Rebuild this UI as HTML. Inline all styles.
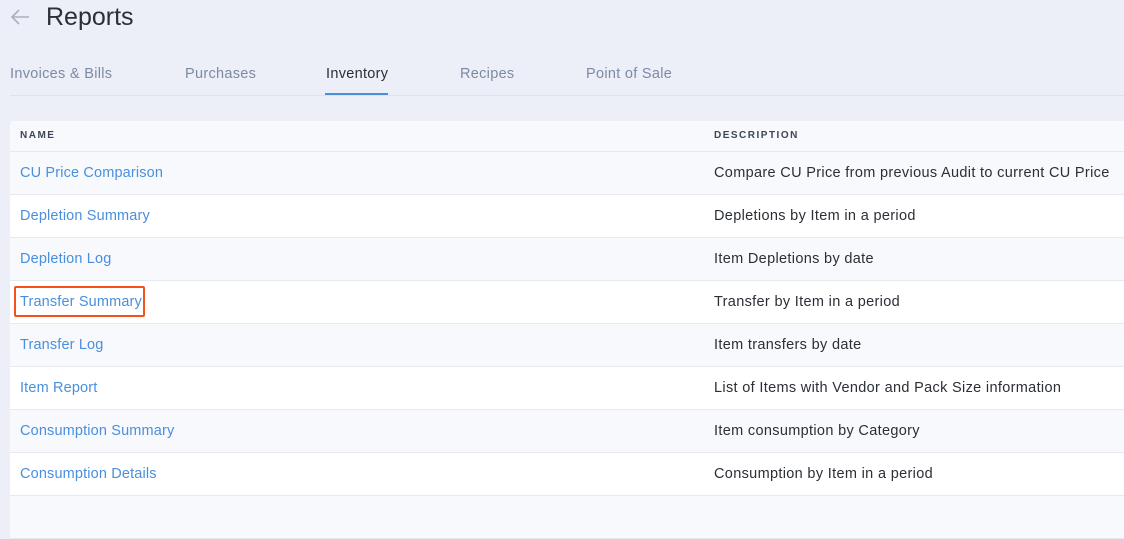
<!DOCTYPE html>
<html><head><style>
body{margin:0;width:1124px;height:506px;background:#eceff8;font-family:"Liberation Sans",sans-serif;overflow:hidden;position:relative}
.back{position:absolute;left:10px;top:8px}
h1{position:absolute;left:46px;top:3px;margin:0;font-weight:normal;font-size:25px;color:#2b2f36}
.tab{position:absolute;top:66px;font-size:14.5px;color:#7d8aa3;letter-spacing:0.3px}
.tabline{position:absolute;left:10px;right:0;top:95px;height:1px;background:#dde2ec}
.card{position:absolute;left:10px;top:121px;width:1114px;height:400px;background:#fff;border-radius:4px 0 0 0}
.hdr{height:30px;position:relative;background:#f8f9fc;border-bottom:1px solid #e6e9f0;border-radius:4px 0 0 0}
.hdr span{position:absolute;top:9px;font-size:10px;letter-spacing:1.5px;font-weight:bold;color:#3c4657}
.row{height:42px;border-bottom:1px solid #e6e9f0;position:relative;font-size:14.5px;letter-spacing:0.33px}
.row.a{background:#f8f9fc}
.row .n{position:absolute;left:10px;top:13px;color:#4a8fdc;letter-spacing:0.15px}
.row .d{position:absolute;left:704px;top:13px;color:#2b2f36}
.hl{position:absolute;left:14px;top:286px;width:127px;height:27px;border:2px solid #f4511e;border-radius:2px}
</style></head><body>
<svg class="back" width="20" height="18" viewBox="0 0 20 18"><path d="M19 9H2M9 2L2 9l7 7" fill="none" stroke="#a8b0c0" stroke-width="1.6"/></svg>
<h1>Reports</h1>
<div class="tab" style="left:10px">Invoices &amp; Bills</div>
<div class="tab" style="left:185px">Purchases</div>
<div class="tab" style="left:326px;color:#2b2f36">Inventory</div>
<div class="tab" style="left:460px">Recipes</div>
<div class="tab" style="left:586px">Point of Sale</div>
<div class="tabline"></div>
<div style="position:absolute;left:325px;top:93px;width:63px;height:2px;background:#4a8fdc"></div>
<div class="card">
<div class="hdr"><span style="left:10px">NAME</span><span style="left:704px">DESCRIPTION</span></div>
<div class="row a"><span class="n">CU Price Comparison</span><span class="d">Compare CU Price from previous Audit to current CU Price</span></div>
<div class="row"><span class="n">Depletion Summary</span><span class="d">Depletions by Item in a period</span></div>
<div class="row a"><span class="n">Depletion Log</span><span class="d">Item Depletions by date</span></div>
<div class="row"><span class="n">Transfer Summary</span><span class="d">Transfer by Item in a period</span></div>
<div class="row a"><span class="n">Transfer Log</span><span class="d">Item transfers by date</span></div>
<div class="row"><span class="n">Item Report</span><span class="d">List of Items with Vendor and Pack Size information</span></div>
<div class="row a"><span class="n">Consumption Summary</span><span class="d">Item consumption by Category</span></div>
<div class="row"><span class="n">Consumption Details</span><span class="d">Consumption by Item in a period</span></div>
<div class="row a"></div>
</div>
<div class="hl"></div>
</body></html>
